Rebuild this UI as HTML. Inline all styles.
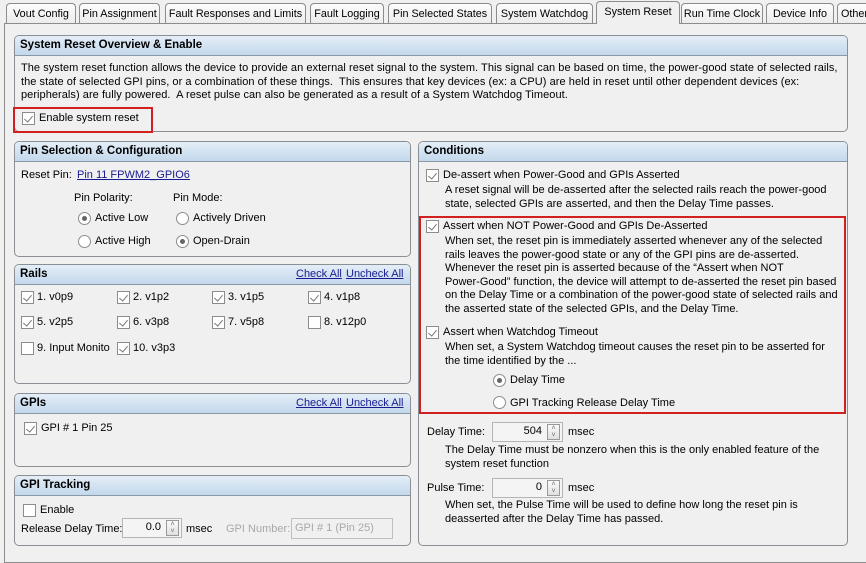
<!DOCTYPE html>
<html><head><style>
*{margin:0;padding:0;box-sizing:border-box}
body{width:866px;height:557px;background:#f0f0f0;font-family:"Liberation Sans","DejaVu Sans",sans-serif;font-size:11px;color:#000;position:relative;overflow:hidden}
.a{position:absolute;white-space:nowrap}
.tab{position:absolute;top:3px;height:21px;border:1px solid #8c8c8c;border-bottom:none;border-radius:4px 4px 0 0;background:linear-gradient(#fcfcfc,#ebebeb);padding:4px 0 0;text-align:center;font-size:10.8px}
.tab.s{top:1px;height:23px;background:#f0f0f0;z-index:3}
.panel{position:absolute;border:1px solid #8a8f95;border-radius:5px;background:#f0f0f0}
.hd{height:20px;background:linear-gradient(#e4eef8,#c3d8ec);border-bottom:1px solid #8a99a8;border-radius:4px 4px 0 0;font-weight:bold;padding:3px 0 0 5px;font-size:11.5px}
.cb{position:absolute;width:13px;height:13px;border:1px solid #8c8c8c;background:#fff}
.cb.c::after{content:"";position:absolute;left:3px;top:1px;width:4px;height:7px;border:solid #777;border-width:0 1.5px 1.5px 0;transform:rotate(40deg)}
.rd{position:absolute;width:13px;height:13px;border:1px solid #8c8c8c;border-radius:50%;background:#fff}
.rd.c::after{content:"";position:absolute;left:3px;top:3px;width:5px;height:5px;border-radius:50%;background:#666}
.lk{color:#1a1a90;text-decoration:underline}
.red{position:absolute;border:2px solid #d02020}
.sp{position:absolute;height:20px;border:1px solid #b5b5b5;background:#f4f4f4;text-align:right;padding:2px 20px 0 0}
.sp i{position:absolute;right:2px;top:1px;width:13px;height:16px;border:1px solid #999;background:linear-gradient(#fafafa,#e0e0e0);font-style:normal;font-size:7px;line-height:7px;text-align:center;color:#666}
</style></head><body>
<div class="tab" style="left:6px;width:70px">Vout Config</div>
<div class="tab" style="left:79px;width:81px">Pin Assignment</div>
<div class="tab" style="left:165px;width:141px">Fault Responses and Limits</div>
<div class="tab" style="left:310px;width:74px">Fault Logging</div>
<div class="tab" style="left:388px;width:104px">Pin Selected States</div>
<div class="tab" style="left:496px;width:97px">System Watchdog</div>
<div class="tab s" style="left:596px;width:84px">System Reset</div>
<div class="tab" style="left:681px;width:82px">Run Time Clock</div>
<div class="tab" style="left:766px;width:68px">Device Info</div>
<div class="tab" style="left:837px;width:40px;text-align:left;padding-left:3px">Other</div>
<div style="position:absolute;left:4px;top:23px;width:870px;height:540px;border:1px solid #8c8c8c;background:#f0f0f0;z-index:1"></div>
<div style="position:relative;z-index:2">
<div class="panel" style="left:14px;top:35px;width:834px;height:97px"><div class="hd">System Reset Overview &amp; Enable</div></div>
<div class="a" style="left:21px;top:62px;line-height:13.5px;letter-spacing:0.05px">The system reset function allows the device to provide an external reset signal to the system. This signal can be based on time, the power-good state of selected rails,<br>the state of selected GPI pins, or a combination of these things.&nbsp; This ensures that key devices (ex: a CPU) are held in reset until other dependent devices (ex:<br>peripherals) are fully powered.&nbsp; A reset pulse can also be generated as a result of a System Watchdog Timeout.</div>
<div class="cb c" style="left:22px;top:112px"></div><div class="a" style="left:39px;top:112px">Enable system reset</div>
<div class="red" style="left:13px;top:107px;width:140px;height:26px"></div>

<div class="panel" style="left:14px;top:141px;width:397px;height:116px"><div class="hd">Pin Selection &amp; Configuration</div></div>
<div class="a" style="left:21px;top:169px">Reset Pin:</div><div class="a lk" style="left:77px;top:169px">Pin 11 FPWM2_GPIO6</div>
<div class="a" style="left:74px;top:192px">Pin Polarity:</div><div class="a" style="left:173px;top:192px">Pin Mode:</div>
<div class="rd c" style="left:78px;top:212px"></div><div class="a" style="left:95px;top:212px">Active Low</div>
<div class="rd" style="left:176px;top:212px"></div><div class="a" style="left:193px;top:212px">Actively Driven</div>
<div class="rd" style="left:78px;top:235px"></div><div class="a" style="left:95px;top:235px">Active High</div>
<div class="rd c" style="left:176px;top:235px"></div><div class="a" style="left:193px;top:235px">Open-Drain</div>

<div class="panel" style="left:14px;top:264px;width:397px;height:120px"><div class="hd">Rails</div></div>
<div class="a lk" style="left:296px;top:268px">Check All</div><div class="a lk" style="left:346px;top:268px">Uncheck All</div>
<div class="cb c" style="left:21px;top:291px"></div><div class="a" style="left:37px;top:291px">1. v0p9</div>
<div class="cb c" style="left:117px;top:291px"></div><div class="a" style="left:133px;top:291px">2. v1p2</div>
<div class="cb c" style="left:212px;top:291px"></div><div class="a" style="left:228px;top:291px">3. v1p5</div>
<div class="cb c" style="left:308px;top:291px"></div><div class="a" style="left:324px;top:291px">4. v1p8</div>
<div class="cb c" style="left:21px;top:316px"></div><div class="a" style="left:37px;top:316px">5. v2p5</div>
<div class="cb c" style="left:117px;top:316px"></div><div class="a" style="left:133px;top:316px">6. v3p8</div>
<div class="cb c" style="left:212px;top:316px"></div><div class="a" style="left:228px;top:316px">7. v5p8</div>
<div class="cb" style="left:308px;top:316px"></div><div class="a" style="left:324px;top:316px">8. v12p0</div>
<div class="cb" style="left:21px;top:342px"></div><div class="a" style="left:37px;top:342px">9. Input Monito</div>
<div class="cb c" style="left:117px;top:342px"></div><div class="a" style="left:133px;top:342px">10. v3p3</div>

<div class="panel" style="left:14px;top:393px;width:397px;height:74px"><div class="hd">GPIs</div></div>
<div class="a lk" style="left:296px;top:397px">Check All</div><div class="a lk" style="left:346px;top:397px">Uncheck All</div>
<div class="cb c" style="left:24px;top:422px"></div><div class="a" style="left:41px;top:422px">GPI # 1 Pin 25</div>

<div class="panel" style="left:14px;top:475px;width:397px;height:71px"><div class="hd">GPI Tracking</div></div>
<div class="cb" style="left:23px;top:504px"></div><div class="a" style="left:40px;top:504px">Enable</div>
<div class="a" style="left:21px;top:523px">Release Delay Time:</div>
<div class="sp" style="left:122px;top:518px;width:60px">0.0<i>˄<br>˅</i></div><div class="a" style="left:186px;top:523px">msec</div>
<div class="a" style="left:226px;top:523px;color:#a8a8a8">GPI Number:</div>
<div class="a" style="left:291px;top:518px;width:102px;height:21px;border:1px solid #c0c0c0;color:#a8a8a8;padding:3px 0 0 3px">GPI # 1 (Pin 25)</div>

<div class="panel" style="left:418px;top:141px;width:430px;height:405px"><div class="hd">Conditions</div></div>
<div class="cb c" style="left:426px;top:169px"></div><div class="a" style="left:443px;top:169px">De-assert when Power-Good and GPIs Asserted</div>
<div class="a" style="left:445px;top:184px;line-height:13.5px">A reset signal will be de-asserted after the selected rails reach the power-good<br>state, selected GPIs are asserted, and then the Delay Time passes.</div>
<div class="cb c" style="left:426px;top:220px"></div><div class="a" style="left:443px;top:220px">Assert when NOT Power-Good and GPIs De-Asserted</div>
<div class="a" style="left:445px;top:235px;line-height:13.5px">When set, the reset pin is immediately asserted whenever any of the selected<br>rails leaves the power-good state or any of the GPI pins are de-asserted.<br>Whenever the reset pin is asserted because of the “Assert when NOT<br>Power-Good” function, the device will attempt to de-asserted the reset pin based<br>on the Delay Time or a combination of the power-good state of selected rails and<br>the asserted state of the selected GPIs, and the Delay Time.</div>
<div class="cb c" style="left:426px;top:326px"></div><div class="a" style="left:443px;top:326px">Assert when Watchdog Timeout</div>
<div class="a" style="left:445px;top:341px;line-height:13.5px">When set, a System Watchdog timeout causes the reset pin to be asserted for<br>the time identified by the ...</div>
<div class="rd c" style="left:493px;top:374px"></div><div class="a" style="left:510px;top:374px">Delay Time</div>
<div class="rd" style="left:493px;top:396px"></div><div class="a" style="left:510px;top:397px">GPI Tracking Release Delay Time</div>
<div class="red" style="left:419px;top:216px;width:427px;height:198px"></div>
<div class="a" style="left:427px;top:426px">Delay Time:</div>
<div class="sp" style="left:492px;top:422px;width:71px">504<i>˄<br>˅</i></div><div class="a" style="left:568px;top:426px">msec</div>
<div class="a" style="left:445px;top:444px;line-height:13.5px">The Delay Time must be nonzero when this is the only enabled feature of the<br>system reset function</div>
<div class="a" style="left:427px;top:482px">Pulse Time:</div>
<div class="sp" style="left:492px;top:478px;width:71px">0<i>˄<br>˅</i></div><div class="a" style="left:568px;top:482px">msec</div>
<div class="a" style="left:445px;top:499px;line-height:13.5px">When set, the Pulse Time will be used to define how long the reset pin is<br>deasserted after the Delay Time has passed.</div>
</div>
</body></html>
